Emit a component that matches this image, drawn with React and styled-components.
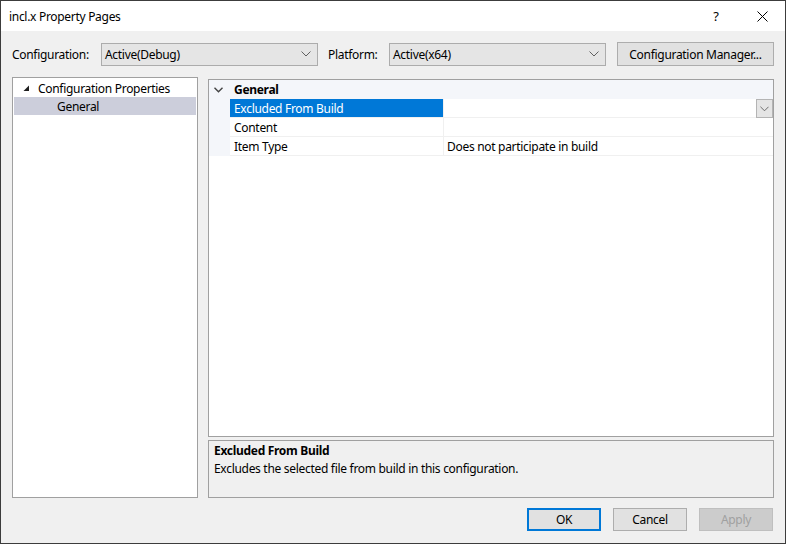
import React from "react";
import styled, { createGlobalStyle } from "styled-components";

const Global = createGlobalStyle`
  html, body { margin: 0; padding: 0; background: #2b2b2b; }
  body { font-family: "Noto Sans", "Open Sans", sans-serif; font-size: 12px; color: #000; letter-spacing: -0.3px; }
  * { box-sizing: border-box; }
`;

const Window = styled.div`
  width: 786px;
  height: 544px;
  border: 1px solid #3c3c3c;
  display: flex;
  flex-direction: column;
  background: #f0f0f0;
  overflow: hidden;
`;

const TitleBar = styled.div`
  height: 30px;
  flex: none;
  background: #fff;
  display: flex;
  align-items: center;
  padding-left: 8px;
`;

const Title = styled.div`
  flex: 1;
`;

const TitleButton = styled.div`
  width: 46px;
  height: 30px;
  display: flex;
  align-items: center;
  justify-content: center;
  font-size: 13px;
`;

const Body = styled.div`
  flex: 1;
  display: flex;
  flex-direction: column;
  padding: 11px 11px 12px 11px;
  min-height: 0;
`;

const Toolbar = styled.div`
  display: flex;
  align-items: center;
  height: 24px;
  flex: none;
`;

const Label = styled.span`
  width: ${(p) => p.$w}px;
  flex: none;
`;

const Combo = styled.div`
  width: 217px;
  height: 23px;
  background: #e5e5e5;
  border: 1px solid #acacac;
  display: flex;
  align-items: center;
  padding: 0 6px 0 3px;
  margin-right: ${(p) => p.$after}px;
  span { flex: 1; }
`;

const Button = styled.div`
  width: ${(p) => p.$w}px;
  height: ${(p) => p.$h || 23}px;
  border: ${(p) => (p.$default ? "2px solid #0078d7" : "1px solid #adadad")};
  background: ${(p) => (p.$disabled ? "#cccccc" : "#e1e1e1")};
  color: ${(p) => (p.$disabled ? "#a0a0a0" : "#000")};
  border-color: ${(p) => (p.$disabled ? "#bfbfbf" : undefined)};
  display: flex;
  align-items: center;
  justify-content: center;
  flex: none;
`;

const Main = styled.div`
  flex: 1;
  display: flex;
  gap: 10px;
  margin-top: 11px;
  min-height: 0;
`;

const TreePanel = styled.div`
  width: 186px;
  background: #fff;
  border: 1px solid #a0a0a0;
  padding: 1px;
`;

const TreeRow = styled.div`
  height: 18px;
  display: flex;
  align-items: center;
  padding-left: ${(p) => p.$indent}px;
  background: ${(p) => (p.$selected ? "#cccedb" : "transparent")};
`;

const Caret = styled.span`
  width: 15px;
  display: inline-flex;
  align-items: center;
`;

const Right = styled.div`
  flex: 1;
  display: flex;
  flex-direction: column;
  gap: 3px;
  padding-top: 2px;
`;

const Grid = styled.div`
  flex: 1;
  background: #fff;
  border: 1px solid #a0a0a0;
  display: flex;
  flex-direction: column;
`;

const Category = styled.div`
  height: 19px;
  background: #f4f6fa;
  display: flex;
  align-items: center;
  font-weight: bold;
`;

const Expander = styled.span`
  width: 25px;
  padding-left: 5px;
  display: inline-flex;
  align-items: center;
`;

const PropRow = styled.div`
  height: 19px;
  display: flex;
  background: #f4f6fa;
`;

const Gutter = styled.div`
  width: 21px;
  flex: none;
`;

const NameCell = styled.div`
  width: 214px;
  flex: none;
  display: flex;
  align-items: center;
  padding-left: 4px;
  background: ${(p) => (p.$selected ? "#0078d7" : "#fff")};
  color: ${(p) => (p.$selected ? "#fff" : "#000")};
  border-bottom: 1px solid #f0f0f0;
  border-right: 1px solid #f0f0f0;
`;

const ValueCell = styled.div`
  flex: 1;
  display: flex;
  align-items: center;
  padding-left: 3px;
  background: #fff;
  border-bottom: 1px solid #f0f0f0;
  span { flex: 1; }
`;

const DropButton = styled.div`
  width: 17px;
  height: 19px;
  align-self: flex-start;
  background: #e5e5e5;
  border: 1px solid #b4b4b4;
  display: flex;
  align-items: center;
  justify-content: center;
`;

const Description = styled.div`
  height: 58px;
  flex: none;
  border: 1px solid #a0a0a0;
  background: #f0f0f0;
  padding: 1px 5px;
  line-height: 18px;
`;

const DescTitle = styled.div`
  font-weight: bold;
`;

const Footer = styled.div`
  display: flex;
  justify-content: flex-end;
  gap: 12px;
  margin-top: 10px;
  padding-right: 1px;
  flex: none;
`;

const Chevron = ({ color = "#606060", w = 10 }) => (
  <svg width={w} height="6" viewBox="0 0 10 6">
    <path d="M0.5 0.5 L5 5 L9.5 0.5" fill="none" stroke={color} strokeWidth="1" />
  </svg>
);

const CloseGlyph = () => (
  <svg width="11" height="11" viewBox="0 0 11 11">
    <path d="M0.5 0.5 L10.5 10.5 M10.5 0.5 L0.5 10.5" stroke="#000" strokeWidth="1" />
  </svg>
);

const TreeArrow = () => (
  <svg width="7" height="7" viewBox="0 0 7 7">
    <path d="M6 0.5 L6 6 L0.5 6 Z" fill="#1e1e1e" />
  </svg>
);

const CategoryChevron = () => (
  <svg width="9" height="6" viewBox="0 0 9 6">
    <path d="M0.5 0.8 L4.5 4.8 L8.5 0.8" fill="none" stroke="#444" strokeWidth="1.4" />
  </svg>
);

const rows = [
  { name: "Excluded From Build", value: "", selected: true },
  { name: "Content", value: "" },
  { name: "Item Type", value: "Does not participate in build" },
];

export default function App() {
  return (
    <>
      <Global />
      <Window>
        <TitleBar>
          <Title>incl.x Property Pages</Title>
          <TitleButton>?</TitleButton>
          <TitleButton>
            <CloseGlyph />
          </TitleButton>
        </TitleBar>
        <Body>
          <Toolbar>
            <Label $w={89}>Configuration:</Label>
            <Combo $after={10}>
              <span>Active(Debug)</span>
              <Chevron />
            </Combo>
            <Label $w={61}>Platform:</Label>
            <Combo $after={11}>
              <span>Active(x64)</span>
              <Chevron />
            </Combo>
            <Button $w={157} $h={24}>Configuration Manager...</Button>
          </Toolbar>
          <Main>
            <TreePanel>
              <TreeRow $indent={9}>
                <Caret>
                  <TreeArrow />
                </Caret>
                Configuration Properties
              </TreeRow>
              <TreeRow $indent={43} $selected>
                General
              </TreeRow>
            </TreePanel>
            <Right>
              <Grid>
                <Category>
                  <Expander>
                    <CategoryChevron />
                  </Expander>
                  General
                </Category>
                {rows.map((r) => (
                  <PropRow key={r.name}>
                    <Gutter />
                    <NameCell $selected={r.selected}>{r.name}</NameCell>
                    <ValueCell>
                      <span>{r.value}</span>
                      {r.selected && (
                        <DropButton>
                          <Chevron w={9} />
                        </DropButton>
                      )}
                    </ValueCell>
                  </PropRow>
                ))}
              </Grid>
              <Description>
                <DescTitle>Excluded From Build</DescTitle>
                <div>Excludes the selected file from build in this configuration.</div>
              </Description>
            </Right>
          </Main>
          <Footer>
            <Button $w={74} $default>OK</Button>
            <Button $w={74}>Cancel</Button>
            <Button $w={74} $disabled>Apply</Button>
          </Footer>
        </Body>
      </Window>
    </>
  );
}
